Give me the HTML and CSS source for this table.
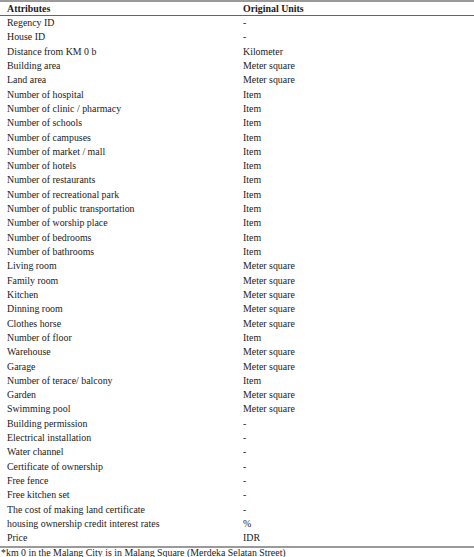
FILE: index.html
```html
<!DOCTYPE html>
<html>
<head>
<meta charset="utf-8">
<link rel="stylesheet" href="styles.css">
</head>
<body>
<div class="sheet">
  <div class="table">
    <div class="row head"><div class="c1">Attributes</div><div class="c2">Original Units</div></div>
    <div class="body">
      <div class="row"><div class="c1">Regency ID</div><div class="c2">-</div></div>
      <div class="row"><div class="c1">House ID</div><div class="c2">-</div></div>
      <div class="row"><div class="c1">Distance from KM 0 b</div><div class="c2">Kilometer</div></div>
      <div class="row"><div class="c1">Building area</div><div class="c2">Meter square</div></div>
      <div class="row"><div class="c1">Land area</div><div class="c2">Meter square</div></div>
      <div class="row"><div class="c1">Number of hospital</div><div class="c2">Item</div></div>
      <div class="row"><div class="c1">Number of clinic / pharmacy</div><div class="c2">Item</div></div>
      <div class="row"><div class="c1">Number of schools</div><div class="c2">Item</div></div>
      <div class="row"><div class="c1">Number of campuses</div><div class="c2">Item</div></div>
      <div class="row"><div class="c1">Number of market / mall</div><div class="c2">Item</div></div>
      <div class="row"><div class="c1">Number of hotels</div><div class="c2">Item</div></div>
      <div class="row"><div class="c1">Number of restaurants</div><div class="c2">Item</div></div>
      <div class="row"><div class="c1">Number of recreational park</div><div class="c2">Item</div></div>
      <div class="row"><div class="c1">Number of public transportation</div><div class="c2">Item</div></div>
      <div class="row"><div class="c1">Number of worship place</div><div class="c2">Item</div></div>
      <div class="row"><div class="c1">Number of bedrooms</div><div class="c2">Item</div></div>
      <div class="row"><div class="c1">Number of bathrooms</div><div class="c2">Item</div></div>
      <div class="row"><div class="c1">Living room</div><div class="c2">Meter square</div></div>
      <div class="row"><div class="c1">Family room</div><div class="c2">Meter square</div></div>
      <div class="row"><div class="c1">Kitchen</div><div class="c2">Meter square</div></div>
      <div class="row"><div class="c1">Dinning room</div><div class="c2">Meter square</div></div>
      <div class="row"><div class="c1">Clothes horse</div><div class="c2">Meter square</div></div>
      <div class="row"><div class="c1">Number of floor</div><div class="c2">Item</div></div>
      <div class="row"><div class="c1">Warehouse</div><div class="c2">Meter square</div></div>
      <div class="row"><div class="c1">Garage</div><div class="c2">Meter square</div></div>
      <div class="row"><div class="c1">Number of terace/ balcony</div><div class="c2">Item</div></div>
      <div class="row"><div class="c1">Garden</div><div class="c2">Meter square</div></div>
      <div class="row"><div class="c1">Swimming pool</div><div class="c2">Meter square</div></div>
      <div class="row"><div class="c1">Building permission</div><div class="c2">-</div></div>
      <div class="row"><div class="c1">Electrical installation</div><div class="c2">-</div></div>
      <div class="row"><div class="c1">Water channel</div><div class="c2">-</div></div>
      <div class="row"><div class="c1">Certificate of ownership</div><div class="c2">-</div></div>
      <div class="row"><div class="c1">Free fence</div><div class="c2">-</div></div>
      <div class="row"><div class="c1">Free kitchen set</div><div class="c2">-</div></div>
      <div class="row"><div class="c1">The cost of making land certificate</div><div class="c2">-</div></div>
      <div class="row"><div class="c1">housing ownership credit interest rates</div><div class="c2">%</div></div>
      <div class="row"><div class="c1">Price</div><div class="c2">IDR</div></div>
    </div>
  </div>
  <div class="note">*km 0 in the Malang City is in Malang Square (Merdeka Selatan Street)</div>
</div>
</body>
</html>
```
FILE: styles.css
```css
html, body {
  margin: 0;
  padding: 0;
  background: #ffffff;
}
.sheet {
  width: 474px;
  font-family: "Liberation Serif", "Times New Roman", serif;
  font-size: 9.9px;
  color: #1a1a1a;
}
.table {
  border-top: 2px solid #9a9a9a;
  border-bottom: 2px solid #9a9a9a;
}
.row {
  display: flex;
  height: 14.32px;
  line-height: 14.32px;
  white-space: nowrap;
}
.row.head {
  height: 13px;
  line-height: 13px;
  font-weight: bold;
  border-bottom: 1px solid #666666;
}
.c1 {
  width: 243px;
  padding-left: 7px;
  box-sizing: border-box;
}
.c2 {
  flex: 1;
}
.note {
  line-height: 10px;
  padding-left: 1px;
}
```
